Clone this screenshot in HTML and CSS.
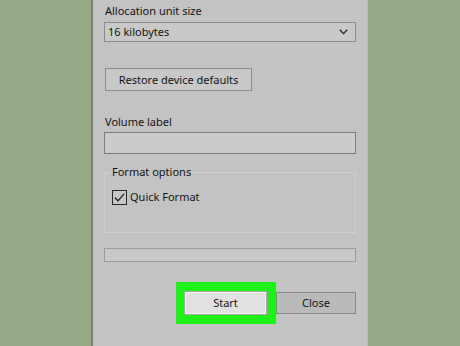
FILE: index.html
```html
<!DOCTYPE html>
<html>
<head>
<meta charset="utf-8">
<link rel="stylesheet" href="styles.css">
</head>
<body>
<div class="desk">
  <div class="dialog">
    <div class="label first">Allocation unit size</div>
    <div class="select">
      <span>16 kilobytes</span>
      <svg class="chev" width="9" height="6" viewBox="0 0 9 6"><path d="M0.8 0.8 L4.5 4.6 L8.2 0.8" fill="none" stroke="#222" stroke-width="1.3"/></svg>
    </div>
    <div class="btn restore">Restore device defaults</div>
    <div class="label vol">Volume label</div>
    <div class="input"></div>
    <fieldset class="group">
      <legend>Format options</legend>
      <div class="check-row">
        <span class="box"><svg width="13" height="13" viewBox="0 0 13 13"><path d="M2 6.8 L5 9.8 L11 2.8" fill="none" stroke="#1a1a1a" stroke-width="1.3"/></svg></span>
        <span>Quick Format</span>
      </div>
    </fieldset>
    <div class="progress"></div>
    <div class="actions">
      <div class="highlight"><div class="btn start">Start</div></div>
      <div class="btn close">Close</div>
    </div>
  </div>
</div>
</body>
</html>
```
FILE: styles.css
```css
html, body {
  margin: 0;
  padding: 0;
  background: #97a886;
  width: 460px;
  height: 346px;
  overflow: hidden;
}
.desk {
  display: flex;
  height: 346px;
  padding-left: 91px;
}
.dialog {
  width: 264px;
  height: 346px;
  box-sizing: border-box;
  background: #c3c3c3;
  border-left: 2px solid #7b8577;
  border-right: 1px solid #b8bcb4;
  padding: 0 0 0 11px;
  font-family: "Noto Sans", "Open Sans", sans-serif;
  font-size: 11px;
  color: #151515;
  display: flex;
  flex-direction: column;
  width: 277px;
}
.dialog > * {
  width: 252px;
  box-sizing: border-box;
}
.label {
  line-height: 16px;
  height: 16px;
  padding-left: 1px;
}
.label.first {
  margin-top: 3px;
}
.select {
  margin-top: 3px;
  height: 20px;
  border: 1px solid #8a8a8a;
  background: #c9c9c9;
  display: flex;
  align-items: center;
  justify-content: space-between;
  padding: 0 7px 0 3px;
  line-height: 16px;
}
.chev {
  display: block;
}
.btn {
  box-sizing: border-box;
  display: flex;
  align-items: center;
  justify-content: center;
  line-height: 16px;
}
.restore {
  margin-top: 26px;
  margin-left: 1px;
  width: 147px;
  height: 23px;
  border: 1px solid #8e8e8e;
  background: #c8c8c8;
}
.label.vol {
  margin-top: 23px;
}
.input {
  margin-top: 2px;
  height: 22px;
  border: 1px solid #7c7c7c;
  background: #cbcbcb;
}
.group {
  margin: 10px 0 0 0;
  padding: 0 0 0 7px;
  border: 1px solid #cfcfcf;
  height: 69px;
  min-width: 0;
}
.group legend {
  padding: 0 1px;
  margin-left: -1px;
  line-height: 16px;
}
.check-row {
  margin-top: 9px;
  display: flex;
  align-items: center;
  gap: 3px;
  line-height: 16px;
}
.box {
  width: 15px;
  height: 15px;
  box-sizing: border-box;
  border: 1px solid #2a2a2a;
  background: #c6c6c6;
  display: flex;
  align-items: center;
  justify-content: center;
}
.box svg {
  display: block;
}
.progress {
  margin-top: 15px;
  height: 14px;
  border: 1px solid #9c9c9c;
  background: #c8c8c8;
}
.actions {
  margin-top: 20px;
  display: flex;
  justify-content: flex-end;
  align-items: center;
}
.highlight {
  background: #1ff01c;
  padding: 9px 9px 9px 8px;
}
.start {
  width: 83px;
  height: 24px;
  border: 2px solid #f2f2f2;
  outline: 1px solid #a8a8a8;
  outline-offset: -1px;
  background: #e1e1e1;
}
.close {
  width: 80px;
  height: 22px;
  border: 1px solid #8a8a8a;
  background: #bababa;
}
```
